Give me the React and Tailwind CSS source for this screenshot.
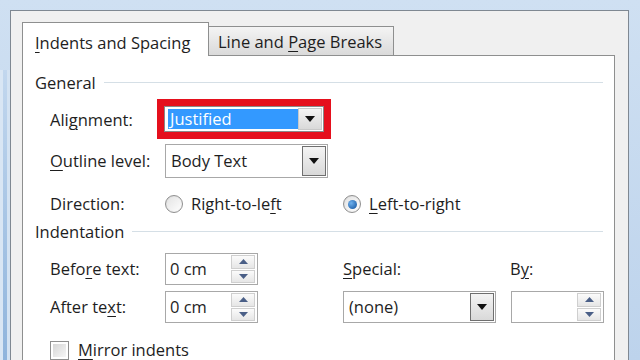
import React from "react";

const FONT = { fontFamily: '"Open Sans", "Noto Sans", "DejaVu Sans", sans-serif' };

function U({ children }) {
  return <span className="underline decoration-1 underline-offset-[3px]">{children}</span>;
}

function Arrow() {
  return (
    <svg width="10" height="6" viewBox="0 0 10 6">
      <path d="M0 0 L10 0 L5 6 Z" fill="#111" />
    </svg>
  );
}

function SmallArrow({ up }) {
  return (
    <svg width="9" height="5" viewBox="0 0 9 5">
      <path d={up ? "M0 5 L9 5 L4.5 0 Z" : "M0 0 L9 0 L4.5 5 Z"} fill="#4a5f87" />
    </svg>
  );
}

function DropButton({ dark }) {
  return (
    <div
      className={
        "w-[24px] self-stretch flex items-center justify-center bg-gradient-to-b from-[#f4f4f4] to-[#d9d9d9] border " +
        (dark ? "border-[#6f6f6f]" : "border-[#c9c9c9]")
      }
    >
      <Arrow />
    </div>
  );
}

function Combo({ w, text, dark = true }) {
  return (
    <div className={"h-full flex border border-[#a8a8a8] bg-white p-px " + w}>
      <div className="flex-1 flex items-center pl-[4px]">{text}</div>
      <DropButton dark={dark} />
    </div>
  );
}

function Spin({ text }) {
  return (
    <div className="w-[93px] h-full flex border border-[#a8a8a8] bg-white py-[1px] pr-[2px]">
      <div className="flex-1 flex items-center pl-[4px]">{text}</div>
      <div className="w-[24px] flex flex-col gap-[1px]">
        <div className="flex-1 flex items-center justify-center border border-[#cfcfcf] bg-gradient-to-b from-[#fbfbfb] to-[#e6e6e6]">
          <SmallArrow up />
        </div>
        <div className="flex-1 flex items-center justify-center border border-[#cfcfcf] bg-gradient-to-b from-[#fbfbfb] to-[#e6e6e6]">
          <SmallArrow />
        </div>
      </div>
    </div>
  );
}

function Radio({ checked }) {
  return (
    <div className="w-[18px] h-[18px] rounded-full border border-[#8f8f8f] bg-gradient-to-br from-[#d9d9d9] to-[#fbfbfb] flex items-center justify-center">
      <div className="w-[14px] h-[14px] rounded-full bg-gradient-to-br from-[#e4e4e4] to-[#fdfdfd] flex items-center justify-center">
        {checked && (
          <div className="w-[9px] h-[9px] rounded-full bg-[radial-gradient(circle_at_35%_35%,#6fb1ee,#0f4f9a)]" />
        )}
      </div>
    </div>
  );
}

function Header({ children }) {
  return (
    <div className="h-[24px] flex items-center pl-[12px] pr-[11px]">
      <span>{children}</span>
      <div className="flex-1 h-px bg-[#d5dfe6] ml-[8px] mt-[-2px]" />
    </div>
  );
}

export default function App() {
  return (
    <div
      className="w-[640px] h-[360px] overflow-hidden bg-[linear-gradient(to_bottom,#cfe0f2,#bdd3ec)] pt-[10px] flex text-[#1e1e1e] text-[16.5px] leading-[24px]"
      style={FONT}
    >
      <div className="w-[10px] flex pt-[60px]">
        <div className="w-[3px] bg-[#d9e6f4]" />
        <div className="w-[4px] bg-gradient-to-b from-[#c2d7ee] to-[#8fb4dc]" />
        <div className="w-[3px] bg-[#d3e2f2]" />
      </div>
      <div className="w-[619px] h-[420px] border-l border-t border-r border-[#7f8892] bg-[#f0f0f0] pl-[11px] pt-[11px] pr-[13px] flex flex-col">
        {/* Tabs */}
        <div className="flex items-end h-[33px]">
          <div className="relative z-10 w-[187px] h-[34px] mb-[-1px] bg-white border-l border-t border-r border-[#8e8f8f] pl-[12px] pt-[8px]">
            <U>I</U>ndents and Spacing
          </div>
          <div className="w-[185px] h-[29px] border-t border-r border-[#8e8f8f] bg-gradient-to-b from-[#f4f4f4] to-[#dadada] pl-[9px] pt-[3px]">
            Line and <U>P</U>age Breaks
          </div>
        </div>
        {/* Page */}
        <div className="flex-1 border border-[#8e8f8f] bg-white flex flex-col">
          <div className="mt-[15px]">
            <Header>General</Header>
          </div>

          {/* Alignment */}
          <div className="mt-[4px] h-[40px] flex items-center pl-[27px]">
            <div className="w-[107px] pt-[2px]">
              Ali<U>g</U>nment:
            </div>
            <div className="w-[174px] h-[40px] border-[7px] border-[#e5101d] bg-white flex">
              <div className="flex-1 flex border border-[#8a8a8a] p-[1px]">
                <div className="flex-1 flex items-center">
                  <div className="w-[130px] h-[20px] bg-[#3399ff] text-white flex items-center pl-[2px] ml-[2px]">
                    Justified
                  </div>
                </div>
                <DropButton dark={false} />
              </div>
            </div>
          </div>

          {/* Outline level */}
          <div className="mt-[5px] h-[34px] flex items-center pl-[27px]">
            <div className="w-[115px]">
              <U>O</U>utline level:
            </div>
            <Combo w="w-[163px]" text="Body Text" />
          </div>

          {/* Direction */}
          <div className="mt-[14px] h-[24px] flex items-center pl-[27px]">
            <div className="w-[115px]">Direction:</div>
            <div className="w-[178px] flex items-center gap-[8px]">
              <Radio />
              <span>
                Right-to-le<U>f</U>t
              </span>
            </div>
            <div className="flex items-center gap-[8px]">
              <Radio checked />
              <span>
                <U>L</U>eft-to-right
              </span>
            </div>
          </div>

          <div className="mt-[4px]">
            <Header>Indentation</Header>
          </div>

          {/* Before text */}
          <div className="mt-[9px] h-[32px] flex items-center pl-[27px]">
            <div className="w-[115px]">
              Befo<U>r</U>e text:
            </div>
            <Spin text="0 cm" />
            <div className="ml-[85px] w-[167px]">
              <U>S</U>pecial:
            </div>
            <div>
              B<U>y</U>:
            </div>
          </div>

          {/* After text */}
          <div className="mt-[6px] h-[32px] flex items-center pl-[27px]">
            <div className="w-[115px]">
              After te<U>x</U>t:
            </div>
            <Spin text="0 cm" />
            <div className="ml-[85px] h-full">
              <Combo w="w-[153px]" text="(none)" />
            </div>
            <div className="ml-[15px] h-full">
              <Spin text="" />
            </div>
          </div>

          {/* Mirror indents */}
          <div className="mt-[17px] h-[20px] flex items-center pl-[27px] gap-[9px]">
            <div className="w-[19px] h-[19px] border border-[#8f8f8f] bg-white p-[2px]">
              <div className="w-full h-full bg-gradient-to-br from-[#d6d6d6] to-[#f7f7f7]" />
            </div>
            <span>
              <U>M</U>irror indents
            </span>
          </div>
        </div>
      </div>
    </div>
  );
}
